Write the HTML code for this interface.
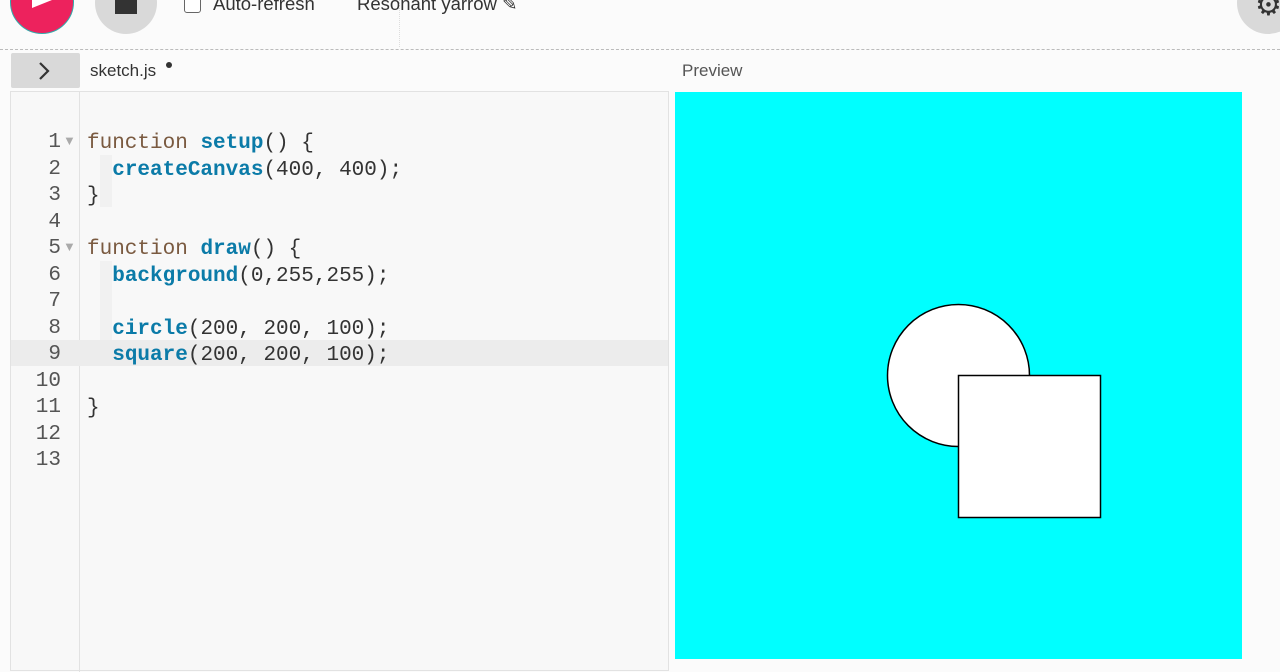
<!DOCTYPE html>
<html><head><meta charset="utf-8"><style>
*{margin:0;padding:0;box-sizing:border-box}
body{width:1280px;height:670px;background:#fbfbfb;position:relative;overflow:hidden;font-family:"Liberation Sans",sans-serif}
.abs{position:absolute}
.code{font-family:"Liberation Mono",monospace;font-size:21px;color:#333;white-space:pre}
.ln{position:absolute;left:11px;width:50px;text-align:right;font-family:"Liberation Mono",monospace;font-size:21px;color:#555}
.kw{color:#7a5a40}.fn{color:#0b7ba8;font-weight:bold}
</style></head><body>
<div class="abs" style="left:10px;top:-30px;width:64px;height:64px;border-radius:50%;background:#ed225d;border:1px solid #3aa"></div>
<svg class="abs" style="left:30px;top:-8px" width="24" height="24"><polygon points="2,0 22,8 2,16" fill="#fff"/></svg>
<div class="abs" style="left:95px;top:-28px;width:62px;height:62px;border-radius:50%;background:#d9d9d9"></div>
<div class="abs" style="left:115px;top:-4px;width:22px;height:18px;background:#333"></div>
<div class="abs" style="left:184px;top:-4px;width:17px;height:17px;border:1.5px solid #666;border-radius:3px;background:#fff"></div>
<div class="abs" style="left:213px;top:-7px;font-size:18.5px;color:#333">Auto-refresh</div>
<div class="abs" style="left:357px;top:-7px;font-size:18.5px;color:#333">Resonant yarrow ✎</div>
<div class="abs" style="left:399px;top:0;width:1px;height:47px;border-left:1px dotted #ddd"></div>
<div class="abs" style="left:1237px;top:-28px;width:62px;height:62px;border-radius:50%;background:#d9d9d9"></div>
<div class="abs" style="left:1255px;top:-12px;font-size:30px;color:#333">⚙</div>
<div class="abs" style="left:0;top:49px;width:1280px;border-top:1px dashed #bbb"></div>
<div class="abs" style="left:11px;top:53px;width:69px;height:35px;background:#d9d9d9;border-radius:2px"></div>
<svg class="abs" style="left:36px;top:61px" width="16" height="20"><path d="M4 2 L12 10 L4 18" stroke="#333" stroke-width="2.2" fill="none"/></svg>
<div class="abs" style="left:90px;top:61px;font-size:17px;color:#333">sketch.js</div>
<div class="abs" style="left:166px;top:62px;width:6px;height:6px;border-radius:50%;background:#333"></div>
<div class="abs" style="left:682px;top:61px;font-size:17px;color:#555">Preview</div>
<div class="abs" style="left:10px;top:91px;width:659px;height:580px;background:#f8f8f8;border:1px solid #e2e2e2"></div>
<div class="abs" style="left:79px;top:92px;width:1px;height:580px;background:#e2e2e2"></div>
<div class="abs" style="left:11px;top:340px;width:657px;height:26px;background:#ececec"></div>
<div class="abs" style="left:100px;top:155px;width:12px;height:52px;background:#f1f1f1"></div>
<div class="abs" style="left:100px;top:261px;width:12px;height:79px;background:#f1f1f1"></div>
<div class="ln" style="top:131px">1</div><div class="ln" style="top:158px">2</div><div class="ln" style="top:184px">3</div><div class="ln" style="top:211px">4</div><div class="ln" style="top:237px">5</div><div class="ln" style="top:264px">6</div><div class="ln" style="top:290px">7</div><div class="ln" style="top:317px">8</div><div class="ln" style="top:343px">9</div><div class="ln" style="top:370px">10</div><div class="ln" style="top:396px">11</div><div class="ln" style="top:423px">12</div><div class="ln" style="top:449px">13</div>
<div class="abs" style="left:63px;top:133px;font-size:13px;color:#aaa">▼</div>
<div class="abs" style="left:63px;top:239px;font-size:13px;color:#aaa">▼</div>
<div class="abs code" style="left:87px;top:131px;line-height:26.5px"><span class="kw">function</span> <span class="fn">setup</span>() {
  <span class="fn">createCanvas</span>(400, 400);
}

<span class="kw">function</span> <span class="fn">draw</span>() {
  <span class="fn">background</span>(0,255,255);

  <span class="fn">circle</span>(200, 200, 100);
  <span class="fn">square</span>(200, 200, 100);

}</div>
<svg class="abs" style="left:675px;top:92px" width="567" height="567">
<rect width="567" height="567" fill="#00ffff"/>
<circle cx="283.5" cy="283.5" r="71" fill="#fff" stroke="#000" stroke-width="1.5"/>
<rect x="283.5" y="283.5" width="142" height="142" fill="#fff" stroke="#000" stroke-width="1.5"/>
</svg>
</body></html>
